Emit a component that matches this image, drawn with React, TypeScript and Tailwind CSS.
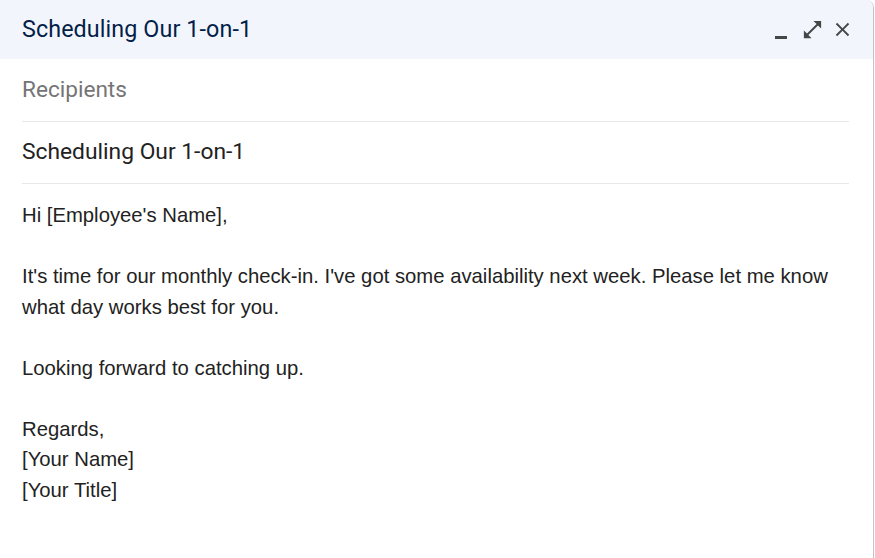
import React from "react";

export default function App() {
  return (
    <div className="w-[875px] h-[558px] bg-white overflow-hidden">
      <div className="w-[874px] h-[558px] border-r border-[#c4c4c4] rounded-tr-[8px] overflow-hidden flex flex-col bg-white">
        <div className="h-[59px] bg-[#f2f6fc] flex items-center justify-between pl-[22px] pr-[19px] shrink-0">
          <div
            className="text-[23.3px] text-[#041e49] tracking-[0.1px]"
            style={{ fontFamily: "Roboto, 'Noto Sans', sans-serif" }}
          >
            Scheduling Our 1-on-1
          </div>
          <div className="flex items-center text-[#444746]">
            <svg width="12" height="12" viewBox="0 0 12 12" fill="currentColor" className="mt-[10px] mr-[14px]">
              <rect x="0" y="7" width="12" height="3" />
            </svg>
            <svg width="23" height="23" viewBox="0 0 24 24" fill="currentColor" className="mr-[7px]">
              <path d="M21 11V3h-8l3.29 3.29-10 10L3 13v8h8l-3.29-3.29 10-10z" />
            </svg>
            <svg width="23" height="23" viewBox="0 0 24 24" fill="currentColor">
              <path d="M19 6.41 17.59 5 12 10.59 6.41 5 5 6.41 10.59 12 5 17.59 6.41 19 12 13.41 17.59 19 19 17.59 13.41 12z" />
            </svg>
          </div>
        </div>
        <div className="pl-[22px] pr-[24px]" style={{ fontFamily: "Roboto, 'Noto Sans', sans-serif" }}>
          <div className="h-[63px] flex items-center border-b border-[#e8e8e8] text-[22.6px] text-[#757575]">
            Recipients
          </div>
          <div className="h-[62px] flex items-center border-b border-[#e8e8e8] text-[22.8px] text-[#222222]">
            Scheduling Our 1-on-1
          </div>
        </div>
        <div
          className="px-[22px] pt-[16px] text-[20.3px] leading-[30.5px] text-[#222222]"
          style={{ fontFamily: "'Liberation Sans', Arial, sans-serif" }}
        >
          <div>Hi [Employee's Name],</div>
          <div>&nbsp;</div>
          <div>
            It's time for our monthly check-in. I've got some availability next week. Please let me know
            <br />
            what day works best for you.
          </div>
          <div>&nbsp;</div>
          <div>Looking forward to catching up.</div>
          <div>&nbsp;</div>
          <div>Regards,</div>
          <div>[Your Name]</div>
          <div>[Your Title]</div>
        </div>
      </div>
    </div>
  );
}
